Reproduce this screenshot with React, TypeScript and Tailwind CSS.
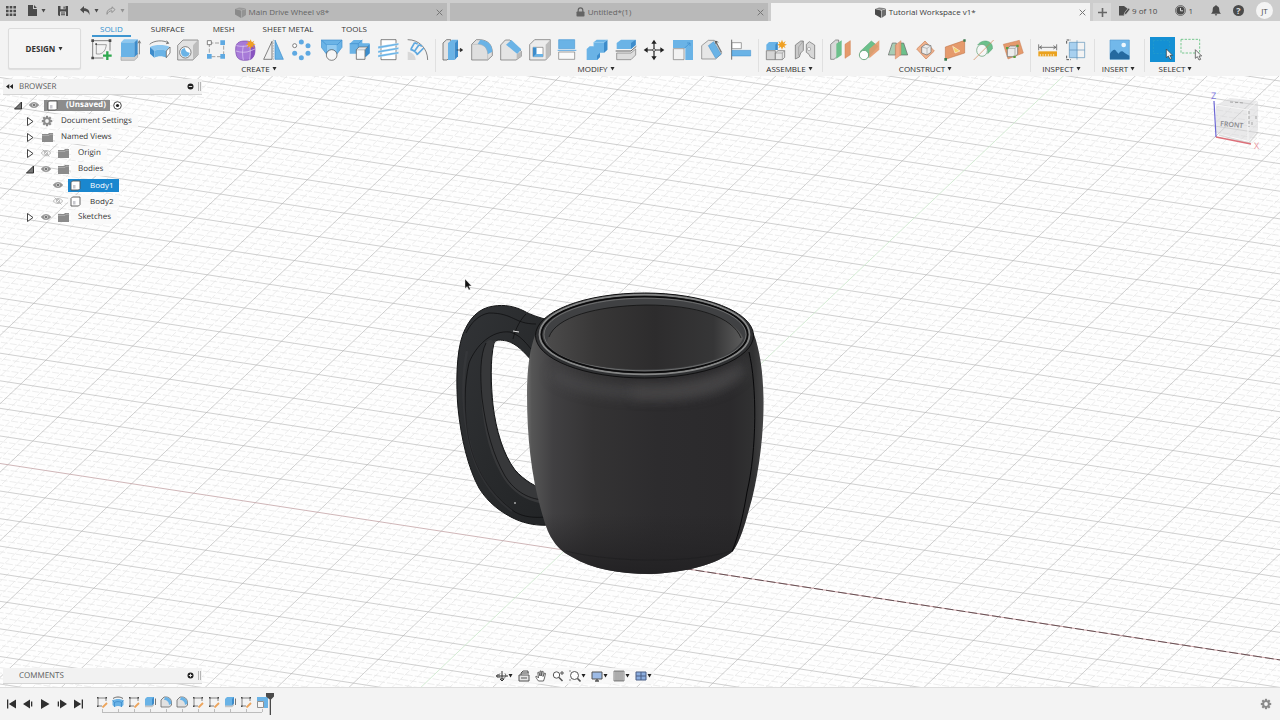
import type { ReactNode } from "react";

const BLUE = "#6ab3e6";
const DEEP = "#3d8ccb";
const INK = "#4a4a4a";
const GREEN = "#6cc08b";
const ORANGE = "#e59a6c";

/* ---------- shared bits ---------- */

function Caret({ className = "" }: { className?: string }) {
  return (
    <svg viewBox="0 0 6 5" className={"h-[4px] w-[5px] shrink-0 " + className} aria-hidden="true">
      <path d="M.5 0h5L3 4.500z" fill="currentColor" />
    </svg>
  );
}

function Art({ children }: { children: ReactNode }) {
  return (
    <svg viewBox="0 0 66 66" className="h-[22px] w-[22px]" fill="none" stroke={INK} strokeWidth="2.4" aria-hidden="true">
      {children}
    </svg>
  );
}

function Star({ x, y }: { x: number; y: number }) {
  return (
    <path
      transform={`translate(${x} ${y})`}
      d="M0-15L3.5-6 11-11 7-3 15 0 7 3 11 11 3.5 6 0 15-3.5 6-11 11-7 3-15 0-7-3-11-11-3.5-6z"
      fill="#f0a022"
      stroke="none"
    />
  );
}

/* ---------- tool icons ---------- */

const createTools: [string, ReactNode][] = [
  ["Create Sketch", <>
    <path d="M5 5h52M5 5v52M57 5v30M5 57h32" strokeWidth="2" />
    <path d="M16 17v28h10c12-3 18-12 20-28z" stroke="#777" strokeWidth="2" />
    <path d="M1 1h8v8H1zM53 1h8v8h-8zM1 53h8v8H1zM13 13h5v5h-5z" fill={INK} stroke="none" />
    <path d="M49 37v26M36 50h26" stroke="#2fa84f" strokeWidth="7" />
  </>],
  ["Extrude", <>
    <path d="M3 52h40l10-9v12L43 64H3z" fill="#cfcfcf" stroke="#888" strokeWidth="1.5" />
    <path d="M3 10L12 1h41L43 10z" fill="#8cc7f0" stroke="none" />
    <path d="M3 10h40v44H3z" fill={BLUE} stroke="none" />
    <path d="M43 10L53 1v44l-10 9z" fill={DEEP} stroke="none" />
    <path d="M58 46V8M54 13l4-8 4 8" strokeWidth="2" />
  </>],
  ["Revolve", <>
    <path d="M2 16C14 4 44 2 58 12M53 5l6 8-8 1" strokeWidth="2" />
    <path d="M3 24C18 16 48 16 62 24L52 36c-12-6-26-6-36 0z" fill="#8cc7f0" stroke="none" />
    <path d="M3 24l13 12v20L3 44z" fill={DEEP} stroke="none" />
    <path d="M16 36c10-6 26-6 36 0v20c-10-6-26-6-36 0z" fill={BLUE} stroke="none" />
    <path d="M52 36l11-12v18L52 56z" fill="#fff" strokeWidth="2" />
  </>],
  ["Hole", <>
    <path d="M2 19L18 3h45v44L48 63H2z" fill="#e2e2e2" stroke="#666" strokeWidth="2" />
    <path d="M48 19L63 3v44L48 63z" fill="#bdbdbd" stroke="none" />
    <circle cx="25" cy="40" r="17" fill="#fff" strokeWidth="2" />
    <path d="M24 27a13 13 0 1 0 14 14c-9 0-14-6-14-14z" fill={BLUE} stroke="none" />
  </>],
  ["Pattern", <>
    <path d="M10 12h34M10 12v36M16 53h30M53 20v26" stroke="#777" strokeWidth="2" strokeDasharray="12 5" />
    <path d="M4 5h12v12H4z" fill="#fff" strokeWidth="2" />
    <path d="M43 4h14v14H43zM3 45h14v14H3zM43 45h14v14H43z" fill="#5ea9e2" stroke="none" />
  </>],
  ["Create Form", <>
    <path d="M2 30C2 12 12 6 30 6s30 6 30 26-8 32-30 32S2 54 2 30z" fill="#a77ad8" stroke="#7848ae" strokeWidth="2" />
    <path d="M44 20c12-4 16 2 16 14s-6 26-14 28z" fill="#8854c0" stroke="none" />
    <path d="M3 36c14 5 32 5 42 0l15-6M25 20c-3 14-3 30 0 43M4 20c14 3 28 3 42-2M44 20c3 14 2 30 0 42" stroke="#e3d2f5" strokeWidth="2" />
    <Star x={47} y={16} />
  </>],
  ["Mirror", <>
    <path d="M27 7v54H2z" fill="#efefef" strokeWidth="2" />
    <path d="M36 3v58h25z" fill={BLUE} stroke={DEEP} strokeWidth="2" />
    <path d="M31 2v62" stroke="#888" strokeWidth="1.5" strokeDasharray="5 3" />
  </>],
  ["Circular Pattern", <>
    <g fill="#5ea9e2" stroke="none">
      <circle cx="28" cy="9" r="7.500" /><circle cx="48" cy="20" r="7.500" /><circle cx="48" cy="43" r="7.500" />
      <circle cx="28" cy="56" r="7.500" /><circle cx="8" cy="43" r="7.500" />
    </g>
    <circle cx="8" cy="20" r="6" fill="#fff" strokeWidth="2" />
  </>],
  ["Thicken", <>
    <path d="M1 3h62v22L47 46c-8-12-22-12-30 0L1 25z" fill={BLUE} stroke={DEEP} strokeWidth="2" />
    <path d="M1 3l16 15h31L63 3M17 18v24" stroke={DEEP} strokeWidth="2" />
    <path d="M17 18h30v20c-8-8-22-8-30 0z" fill="#93cbf1" stroke="none" />
    <circle cx="32" cy="48" r="16" fill="#f6f6f6" strokeWidth="2" />
  </>],
  ["Boundary Fill", <>
    <path d="M2 14L14 3h26v10h22l0 30-12 10H30V44H2z" fill={BLUE} stroke="none" />
    <path d="M2 14h26l12-11M28 14v18" stroke={DEEP} strokeWidth="2" />
    <path d="M50 28l12-13v28L50 54z" fill={DEEP} stroke="none" />
    <path d="M22 32h26v29H22z" fill="#f8f8f8" strokeWidth="2" />
    <path d="M22 32l8-8h26l-8 8" fill="#e8e8e8" strokeWidth="1.5" />
  </>],
  ["Rib", <>
    <path d="M9 2h45v60H9z" fill="#fff" strokeWidth="2" />
    <path d="M0 22l62-10v6L0 29zM0 35l62-10v6L0 42zM0 48l62-10v6L0 55z" fill={BLUE} stroke="#fff" strokeWidth="1" />
  </>],
  ["Emboss", <>
    <path d="M2 2c34 0 60 26 60 61" strokeWidth="2" />
    <path d="M2 38c13 0 24 11 24 25H2z" fill="#d8d8d8" stroke="none" />
    <path d="M10 31c9 2 17 8 22 17M23 11L12 30M36 17L23 36M50 27L31 46M23 11l9 4M36 17l9 5" stroke="#5fa9e0" strokeWidth="5" />
  </>],
];

const modifyTools: [string, ReactNode][] = [
  ["Press Pull", <>
    <path d="M3 12L14 2h12v50L15 63H3z" fill="#e2e2e2" strokeWidth="2" />
    <path d="M18 12L30 2h18L38 12v51H18z" fill={BLUE} stroke="none" />
    <path d="M38 12L48 2v50L38 63z" fill={DEEP} stroke="none" />
    <path d="M44 33h15M55 28l7 5-7 5z" fill="#222" stroke="#222" strokeWidth="2" />
  </>],
  ["Fillet", <>
    <path d="M2 16L16 2h12c22 2 36 14 36 40v8L50 63H2z" fill="#dfdfdf" stroke="#666" strokeWidth="2" />
    <path d="M28 2c22 2 36 14 36 36l-14 8C48 26 40 18 20 15z" fill={BLUE} stroke="none" />
    <path d="M2 16h18c20 0 30 12 30 30v17" stroke="#aaa" strokeWidth="1.5" />
  </>],
  ["Chamfer", <>
    <path d="M2 18L16 3h14l34 34v15L48 63H2z" fill="#e4e4e4" stroke="#666" strokeWidth="2" />
    <path d="M34 3l30 28-12 14-34-28z" fill={BLUE} stroke="none" />
    <path d="M50 46v17l14-12V37z" fill="#bbb" stroke="none" />
  </>],
  ["Shell", <>
    <path d="M2 17L17 2h47v46L50 63H2z" fill="#ececec" stroke="#666" strokeWidth="2" />
    <path d="M50 17L64 2v46L50 63z" fill="#bdbdbd" stroke="none" />
    <path d="M12 25h30v28H12z" fill="#fff" stroke="#777" strokeWidth="2" />
    <path d="M12 25h10v20h20v8H12z" fill={BLUE} stroke="none" />
    <path d="M12 53l10-9V26H12z" fill={DEEP} stroke="none" />
  </>],
  ["Replace Face", <>
    <path d="M5 2h48v27H5z" fill={BLUE} stroke="#4b9ad6" strokeWidth="2" />
    <path d="M5 39h48v22H5z" fill="#fafafa" stroke="#777" strokeWidth="2" />
    <path d="M2 34h56" stroke="#5ea9e2" strokeWidth="3" />
  </>],
  ["Combine", <>
    <path d="M2 30l9-8h12V10l9-8h32v30l-10 9H42v13l-9 9H2z" fill={BLUE} stroke="none" />
    <path d="M54 10l10-8v30l-10 9zM33 50l9-9v13l-9 9z" fill={DEEP} stroke="none" />
    <path d="M23 22V10h31l10-8" stroke="#a8d6f5" strokeWidth="2" />
  </>],
  ["Split Body", <>
    <path d="M5 12l13-10h44v16L48 30H5z" fill={BLUE} stroke="none" />
    <path d="M48 12L62 2v16L48 30z" fill={DEEP} stroke="none" />
    <path d="M2 36h46l16-14" stroke="#444" strokeWidth="2.5" />
    <path d="M5 42h43l14-12v18L48 62H5z" fill="#ddd" stroke="#777" strokeWidth="2" />
  </>],
  ["Move", <>
    <path d="M33 8v50M8 33h50" stroke="#222" strokeWidth="3.5" />
    <path d="M33 2l-8 12h16zM33 64l-8-12h16zM2 33l12-8v16zM64 33l-12-8v16z" fill="#222" stroke="none" />
    <circle cx="33" cy="33" r="4" fill="#fff" stroke="#222" strokeWidth="2" />
  </>],
  ["Scale", <>
    <path d="M3 3h60v60H40V27H3z" fill={BLUE} stroke="none" />
    <path d="M4 29h32v33H4z" fill="#f2f2f2" stroke="#777" strokeWidth="2" />
    <path d="M36 29L54 12M54 12h-9M54 12v9" stroke={DEEP} strokeWidth="2" />
  </>],
  ["Draft", <>
    <path d="M2 20L22 4h18L62 44 44 60H2z" fill="#e6e6e6" stroke="#777" strokeWidth="2" />
    <path d="M22 20L38 8l22 38-16 12z" fill={BLUE} stroke={DEEP} strokeWidth="1.5" />
    <path d="M44 6l18 34M44 6l1 9M44 6l8 4" stroke="#333" strokeWidth="2" />
  </>],
  ["Align", <>
    <path d="M5 2v60" stroke="#555" strokeWidth="2.5" />
    <path d="M6 11h28v18H6z" fill="#fff" stroke="#777" strokeWidth="2" />
    <path d="M6 34h56v17H6z" fill={BLUE} stroke={DEEP} strokeWidth="1.5" />
  </>],
];

const assembleTools: [string, ReactNode][] = [
  ["New Component", <>
    <path d="M4 17l8-8h26v24H4z" fill={BLUE} stroke="none" />
    <path d="M31 17l7-8v24h-7z" fill={DEEP} stroke="none" />
    <path d="M4 35h27v27H4z" fill="#d4d4d4" stroke="#666" strokeWidth="2" />
    <path d="M31 42l8-7h20v20l-7 7H31z" fill="#e5e5e5" stroke="#666" strokeWidth="2" />
    <path d="M31 42h21v20M52 42l7-7" stroke="#777" strokeWidth="1.5" />
    <Star x={51} y={17} />
  </>],
  ["Joint", <>
    <path d="M4 18L20 6h8v28l-8 8-4 12-12 6z" fill="#c9c9c9" stroke="#666" strokeWidth="2" />
    <path d="M14 24L28 6M14 24v26" stroke="#888" strokeWidth="1.5" />
    <path d="M62 18L46 8l-9 8v24l8 6 4 8 13 6z" fill="#d7d7d7" stroke="#666" strokeWidth="2" />
    <circle cx="45" cy="30" r="5" fill="#f4f4f4" stroke="#888" strokeWidth="1.5" />
  </>],
];

const constructTools: [string, ReactNode][] = [
  ["Offset Plane", <>
    <path d="M5 16L20 3h9v46L15 61H5z" fill="#d9d9d9" stroke="#666" strokeWidth="2" />
    <path d="M22 14L38 4v44L22 59z" fill={GREEN} stroke="none" />
    <path d="M48 16L64 5v42L48 58z" fill={ORANGE} stroke="#d08050" strokeWidth="1.5" />
  </>],
  ["Plane at Angle", <>
    <path d="M6 38L40 6l20 16-30 34z" fill={GREEN} stroke="#4f9f6c" strokeWidth="1.5" />
    <path d="M34 30L64 4v28L34 58z" fill={ORANGE} opacity=".9" stroke="none" />
    <circle cx="18" cy="48" r="14" fill="#fff" stroke="#5a9c70" strokeWidth="2.5" />
  </>],
  ["Midplane", <>
    <path d="M4 48L16 12h12L26 48z" fill="#a9cdb5" stroke="#666" strokeWidth="2" />
    <path d="M36 12h14l12 36H38z" fill={GREEN} stroke="#666" strokeWidth="2" />
    <path d="M25 18L42 5v42L25 60z" fill="#efa37c" opacity=".9" stroke="#c97d52" strokeWidth="1.5" />
  </>],
  ["Plane Through Edges", <>
    <path d="M5 30L30 6l28 30-25 24z" fill="#f0b28d" stroke="#c97d52" strokeWidth="2" />
    <path d="M20 24l12-8 16 4v20l-12 8-16-6z" fill="#ececec" stroke="#666" strokeWidth="2" />
    <path d="M20 24l16 4 12-8M36 28v20" stroke="#888" strokeWidth="1.5" />
  </>],
  ["Plane Through Points", <>
    <path d="M4 24L62 4v38L4 61z" fill={ORANGE} stroke="#b9683b" strokeWidth="1.5" />
    <path d="M26 22l22 14-15 6z" fill="#f3d26b" stroke="#fff" strokeWidth="1.5" />
    <path d="M1 57h8v8H1zM58 1h7v7h-7z" fill="#3d7b50" stroke="none" />
  </>],
  ["Axis Through Cylinder", <>
    <path d="M14 18C28-2 62 4 58 30L44 44c4-18-10-32-30-26z" fill={GREEN} stroke="#4f9f6c" strokeWidth="1.5" />
    <ellipse cx="27" cy="34" rx="16" ry="18" fill="#f6f6f6" stroke="#5a9c70" strokeWidth="2" />
    <path d="M2 63L62 3" stroke="#d08050" strokeWidth="2" />
  </>],
  ["Tangent Plane", <>
    <path d="M4 16L52 4l12 38-46 18z" fill={ORANGE} stroke="#c97d52" strokeWidth="1.5" />
    <path d="M16 28l9-7h22v24l-8 8H16z" fill="#ececec" stroke="#666" strokeWidth="2" />
    <path d="M16 28h23v25M39 28l8-7" stroke="#777" strokeWidth="1.5" />
    <path d="M12 24h7v7h-7zM43 17h7v7h-7zM34 50h7v7h-7z" fill="#5c9d3f" stroke="none" />
  </>],
];

const inspectTools: [string, ReactNode][] = [
  ["Measure", <>
    <path d="M5 16v18M59 16v18M9 25h46M15 20l-8 5 8 5M49 20l8 5-8 5" stroke="#444" strokeWidth="2" />
    <path d="M4 37h56v15H4z" fill="#eaa21f" stroke="none" />
    <path d="M10 45v7M18 45v7M26 45v7M34 45v7M42 45v7M50 45v7" stroke="#fff" strokeWidth="2" />
  </>],
  ["Interference", <>
    <path d="M10 10h24v46H10z" fill="#a8d0ef" stroke="none" />
    <path d="M10 10h46v46H10zM33 4v58M10 33h46" stroke="#5a8fb8" strokeWidth="2" />
    <path d="M2 14V3h12M2 50v12h12" stroke="#333" strokeWidth="2.5" strokeDasharray="8 3" />
  </>],
];

const insertTools: [string, ReactNode][] = [
  ["Insert Image", <>
    <path d="M3 3h58v58H3z" fill="#72b8ea" stroke="#5a9fd0" strokeWidth="2" />
    <path d="M3 44c10-14 14-14 20-6l6 6c6-8 10-10 18-2l14 8v11H3z" fill="#25699f" stroke="none" />
    <circle cx="44" cy="18" r="7" fill="#eef7fd" stroke="none" />
  </>],
];

/* ---------- tool groups ---------- */

function ToolGroup({ name, tools, className }: { name: string; tools: [string, ReactNode][]; className: string }) {
  return (
    <section className="flex shrink-0 flex-col" aria-label={name}>
      <div className={"grid h-[25px] auto-cols-fr grid-flow-col items-center justify-items-center " + className}>
        {tools.map(([label, art]) => (
          <button key={label} type="button" aria-label={label} className="flex">
            <Art>{art}</Art>
          </button>
        ))}
      </div>
      <GroupLabel name={name} />
    </section>
  );
}

function GroupLabel({ name }: { name: string }) {
  return (
    <button type="button" className="mt-px flex h-3 items-center justify-center gap-0.5 pr-0.5 text-[8px] leading-3 text-[#2c2c2c]">
      {name}
      <Caret />
    </button>
  );
}

function Divider() {
  return <div className="mt-0.5 h-[33px] w-px shrink-0 bg-[#e0e0e0]" />;
}

function Pointer({ x, y }: { x: number; y: number }) {
  return (
    <path
      transform={`translate(${x} ${y})`}
      d="M0 0v26l6-5 5 10 5-2-5-10h8z"
      fill="#f4f4f4"
      stroke="#333"
      strokeWidth="2"
    />
  );
}

function SelectGroup() {
  return (
    <section className="flex shrink-0 flex-col" aria-label="Select">
      <div className="grid h-[25px] w-[57px] grid-cols-2 items-center justify-items-center">
        <button type="button" aria-label="Select" className="h-[25px] w-[25px] bg-[#1490d4]">
          <svg viewBox="0 0 75 75" className="h-[25px] w-[25px]" fill="none" aria-hidden="true">
            <path d="M10 10h48v40H10z" stroke="#2b9fc9" strokeWidth="2" strokeDasharray="6 4" />
            <Pointer x={49} y={36} />
          </svg>
        </button>
        <button type="button" aria-label="Window Selection" className="flex">
          <svg viewBox="0 0 66 66" className="h-[22px] w-[22px] overflow-visible" fill="none" aria-hidden="true">
            <path d="M3 1h56v41H3z" stroke="#5fbf7c" strokeWidth="2.5" strokeDasharray="7 4" />
            <Pointer x={46} y={32} />
          </svg>
        </button>
      </div>
      <GroupLabel name="SELECT" />
    </section>
  );
}

/* ---------- title bar ---------- */

function CubeGlyph({ className }: { className: string }) {
  return (
    <svg viewBox="0 0 11 11" className={"h-[11px] w-[11px] " + className} aria-hidden="true">
      <path d="M0 2l4-1.500 7 .8-4 1.700z" fill="currentColor" opacity=".65" />
      <path d="M0 2l6 1.500V11L0 7.500z" fill="currentColor" />
      <path d="M6.500 3.500L11 2v6l-4.500 3z" fill="currentColor" opacity=".8" />
    </svg>
  );
}

function LockGlyph() {
  return (
    <svg viewBox="0 0 9 10" className="h-[10px] w-[9px]" aria-hidden="true">
      <path d="M2.200 5V3.200a2.300 2.300 0 0 1 4.600 0V5" fill="none" stroke="currentColor" strokeWidth="1.200" />
      <rect x=".5" y="4.500" width="8" height="5" rx=".8" fill="currentColor" />
    </svg>
  );
}

function FileTab({ title, active = false, locked = false }: { title: string; active?: boolean; locked?: boolean }) {
  return (
    <div
      className={
        "flex min-w-0 flex-1 items-center pr-0.5 pl-0.5 " +
        (active ? "bg-[#f3f3f3] text-[#3a3a3a]" : "bg-[#b9b9b9] text-[#646464]")
      }
    >
      <button type="button" className="flex min-w-0 flex-1 items-center justify-center gap-[3px] text-[8px] leading-3">
        {locked ? <LockGlyph /> : <CubeGlyph className={active ? "text-[#4a4a4a]" : "text-[#8a8a8a]"} />}
        {title}
      </button>
      <button type="button" aria-label={"Close " + title} className="flex p-0.5">
        <svg viewBox="0 0 7 7" className="h-[7px] w-[7px]" aria-hidden="true">
          <path d="M.7.7l5.600 5.600M6.300.7L.7 6.300" stroke="#777" strokeWidth="1" />
        </svg>
      </button>
    </div>
  );
}

function TitleBar() {
  return (
    <header className="flex h-[21px] shrink-0 items-stretch bg-[#cdcdcd] text-[#4b4b4b]">
      <div className="flex w-[128px] shrink-0 items-center pl-[6px]">
        <button type="button" aria-label="Data Panel" className="flex">
          <svg viewBox="0 0 10 10" className="h-[10px] w-[10px]" fill="currentColor" aria-hidden="true">
            <path d="M0 0h2.600v2.600H0zM3.700 0h2.600v2.600H3.700zM7.400 0H10v2.600H7.400zM0 3.700h2.600v2.600H0zM3.700 3.700h2.600v2.600H3.700zM7.400 3.700H10v2.600H7.400zM0 7.400h2.600V10H0zM3.700 7.400h2.600V10H3.700zM7.400 7.400H10V10H7.400z" />
          </svg>
        </button>
        <button type="button" aria-label="File" className="ml-3 flex items-center gap-1">
          <svg viewBox="0 0 9 11" className="h-[11px] w-[9px]" fill="currentColor" aria-hidden="true">
            <path d="M0 0h5v4h4v7H0zM6 0l3 3H6z" />
          </svg>
          <Caret />
        </button>
        <button type="button" aria-label="Save" className="ml-3 flex">
          <svg viewBox="0 0 10 10" className="h-[10px] w-[10px]" aria-hidden="true">
            <path d="M0 0h10v10H1L0 9z" fill="currentColor" />
            <path d="M2.500 0h5v3.300h-5zM2 5.500h6V10H2z" fill="#cdcdcd" />
            <path d="M5.500.500h1.200v2.200H5.500zM3 6.500h4v1H3zM3 8.300h4v1H3z" fill="currentColor" />
          </svg>
        </button>
        <button type="button" aria-label="Undo" className="ml-3 flex items-center gap-1">
          <svg viewBox="0 0 10 9" className="h-[9px] w-[10px]" aria-hidden="true">
            <path d="M4 0v2.200c3.500 0 6 2 5.500 6.800C8.500 6.200 7 5 4 5v2.300L0 3.700z" fill="currentColor" />
          </svg>
          <Caret />
        </button>
        <button type="button" aria-label="Redo" className="ml-[7px] flex items-center gap-1 text-[#929292]">
          <svg viewBox="0 0 10 9" className="h-[9px] w-[10px]" aria-hidden="true">
            <path d="M6 .8v1.900C3 2.700.6 4.500 1 8.300 2 6 3.500 4.800 6 4.800v1.800l3-3z" fill="none" stroke="currentColor" />
          </svg>
          <Caret />
        </button>
      </div>
      <nav className="mt-[3px] flex min-w-0 flex-1 gap-[3px]" aria-label="Documents">
        <FileTab title="Main Drive Wheel v8*" />
        <FileTab title="Untitled*(1)" locked />
        <FileTab title="Tutorial Workspace v1*" active />
      </nav>
      <button type="button" aria-label="New Design" className="mt-[3px] ml-[3px] flex w-[18px] items-center justify-center bg-[#d8d8d8]">
        <svg viewBox="0 0 9 9" className="h-[9px] w-[9px]" aria-hidden="true">
          <path d="M4.500 0v9M0 4.500h9" stroke="#666" strokeWidth="1.600" />
        </svg>
      </button>
      <div className="flex w-[169px] shrink-0 items-center pl-2 text-[8px] leading-3">
        <button type="button" className="flex items-center gap-0.5">
          <svg viewBox="0 0 11 10" className="h-[10px] w-[11px]" aria-hidden="true">
            <path d="M0 0h5l4 3-4 6.500H0z" fill="currentColor" />
            <path d="M5 9l1-2.800L9.500 2 11 3.300 7.500 8z" fill="currentColor" stroke="#cdcdcd" strokeWidth=".7" />
          </svg>
          9 of 10
        </button>
        <button type="button" className="ml-[18px] flex items-center gap-0.5">
          <svg viewBox="0 0 11 11" className="h-[11px] w-[11px]" aria-hidden="true">
            <circle cx="5.500" cy="5.500" r="5" fill="none" stroke="currentColor" strokeWidth=".7" />
            <circle cx="5.500" cy="5.500" r="4" fill="currentColor" />
            <path d="M5.500 3v2.800H8" stroke="#ddd" strokeWidth="1" fill="none" />
          </svg>
          1
        </button>
        <button type="button" aria-label="Notifications" className="ml-[18px] flex">
          <svg viewBox="0 0 10 11" className="h-[11px] w-[10px]" fill="currentColor" aria-hidden="true">
            <path d="M5 0l1 1c2 .7 2.300 2 2.300 4 0 1.800.7 2.800 1.700 3.700H0C1 7.800 1.700 6.800 1.700 5c0-2 .3-3.300 2.300-4zM3.800 9.300h2.400a1.200 1.200 0 0 1-2.400 0z" />
          </svg>
        </button>
        <button type="button" aria-label="Help" className="ml-3 flex h-[11px] w-[11px] items-center justify-center rounded-full bg-[#4b4b4b] text-[9px] leading-none font-bold text-[#dedede]">
          ?
        </button>
        <button type="button" className="ml-3 flex h-[17px] w-[17px] items-center justify-center rounded-full bg-[#f4f4f4] text-[8px] leading-none">
          JT
        </button>
      </div>
    </header>
  );
}

/* ---------- ribbon ---------- */

function Ribbon() {
  const tabs = ["SOLID", "SURFACE", "MESH", "SHEET METAL", "TOOLS"];
  return (
    <div className="flex h-[55px] shrink-0 overflow-hidden bg-[#f3f3f3] pl-2 text-[#333]">
      <button
        type="button"
        className="mt-[7px] flex h-[41px] w-[73px] shrink-0 items-center justify-center gap-[3px] rounded-xs border border-[#dcdcdc] bg-[#f5f5f5] text-[8px] font-bold shadow-[0_1px_1px_#00000018]"
      >
        DESIGN
        <Caret />
      </button>
      <div className="ml-[7px] flex min-w-0 flex-col pt-px">
        <div className="ml-1 flex h-[15px] gap-3" role="tablist">
          {tabs.map((tab, i) => (
            <button
              key={tab}
              type="button"
              role="tab"
              aria-selected={i === 0}
              className={
                "flex items-center border-b-2 px-2 pt-px text-[8px] leading-3 whitespace-nowrap " +
                (i === 0 ? "border-[#3f96d0] text-[#2f8fce]" : "border-transparent")
              }
            >
              {tab}
            </button>
          ))}
        </div>
        <div className="flex gap-[3px]">
          <ToolGroup name="CREATE" tools={createTools} className="w-[344px]" />
          <Divider />
          <ToolGroup name="MODIFY" tools={modifyTools} className="w-[316px]" />
          <Divider />
          <ToolGroup name="ASSEMBLE" tools={assembleTools} className="w-[57px]" />
          <Divider />
          <ToolGroup name="CONSTRUCT" tools={constructTools} className="w-[201px]" />
          <Divider />
          <ToolGroup name="INSPECT" tools={inspectTools} className="w-[57px]" />
          <Divider />
          <ToolGroup name="INSERT" tools={insertTools} className="w-[43px]" />
          <Divider />
          <SelectGroup />
        </div>
      </div>
    </div>
  );
}

/* ---------- modelling scene ---------- */

const ORIGIN = { x: 565, y: 550.2 };
const U = { x: 61.9, y: 9.5 };
const V = { x: 24.95, y: -23.74 };

function at(u: number, v: number) {
  return { x: ORIGIN.x + u * U.x + v * V.x, y: ORIGIN.y + u * U.y + v * V.y };
}

function segment(u1: number, v1: number, u2: number, v2: number) {
  const a = at(u1, v1);
  const b = at(u2, v2);
  return `M${a.x.toFixed(1)} ${a.y.toFixed(1)}L${b.x.toFixed(1)} ${b.y.toFixed(1)}`;
}

function gridPaths() {
  let major = "";
  let minor = "";
  for (let i = -150; i <= 150; i++) {
    const k = i / 5;
    const d = segment(-30, k, 30, k) + segment(k, -30, k, 30);
    if (i % 5 === 0) {
      if (i !== 0) major += d;
    } else {
      minor += d;
    }
  }
  return { major, minor };
}

const grid = gridPaths();

const HANDLE =
  "M548 320C538 317 531 315 524 311C514 306 504 304.500 494 306C478 308 469 319 463 334C456 352 456 385 458 408C461 438 468 468 479 488C488 503 502 513 515 519C526 524 538 526 550 525L550 492C535 487 524 480 515 470C503 454 496 430 493 405C491 385 490 360 494 343C496 339 500 340 507 341C517 344 524 352 532 361L550 350Z";
const BODY =
  "M535.500 334C530 348 527 368 527 395C527 440 532 482 544 520C550 541 560 551 572 557C592 569 620 574 650 574C684 573 718 564 733 551C742 538 746 520 752 499C760 466 764 430 763.500 398C763 372 760 350 753.500 333Z";

function Scene() {
  return (
    <svg viewBox="0 76 1280 611" preserveAspectRatio="xMidYMid slice" className="absolute inset-0 h-full w-full" role="img" aria-label="Mug model on the ground grid">
      <defs>
        <linearGradient id="wall" x1="0" x2="1" y1="0" y2="0">
          <stop offset="0" stopColor="#6b6b6b" />
          <stop offset=".02" stopColor="#565656" />
          <stop offset=".11" stopColor="#414042" />
          <stop offset=".28" stopColor="#343334" />
          <stop offset=".55" stopColor="#2d2c2e" />
          <stop offset=".86" stopColor="#2b2a2c" />
          <stop offset=".955" stopColor="#313132" />
          <stop offset="1" stopColor="#444445" />
        </linearGradient>
        <linearGradient id="foot" x1="0" x2="0" y1="0" y2="1">
          <stop offset=".75" stopColor="#242325" stopOpacity="0" />
          <stop offset="1" stopColor="#222123" stopOpacity=".95" />
        </linearGradient>
        <linearGradient id="cavity" x1="0" x2="1" y1="0" y2="0">
          <stop offset="0" stopColor="#4c4b4b" />
          <stop offset=".25" stopColor="#383737" />
          <stop offset=".55" stopColor="#2d2c2d" />
          <stop offset=".85" stopColor="#363637" />
          <stop offset="1" stopColor="#5c5c5c" />
        </linearGradient>
        <linearGradient id="grip" x1="0" x2="1" y1="0" y2="1">
          <stop offset="0" stopColor="#323437" />
          <stop offset=".5" stopColor="#292b2d" />
          <stop offset="1" stopColor="#222426" />
        </linearGradient>
        <filter id="soft" x="-30%" y="-60%" width="160%" height="220%">
          <feGaussianBlur stdDeviation="6" />
        </filter>
        <clipPath id="bodyClip"><path d={BODY} /></clipPath>
      </defs>
      <rect x="0" y="76" width="1280" height="611" fill="#fefefe" />
      <path d={grid.minor} stroke="#dedede" strokeWidth=".55" strokeDasharray="7 2" fill="none" />
      <path d={grid.major} stroke="#b0b0b0" strokeWidth=".6" fill="none" />
      <path d={segment(0, -30, 0, 30)} stroke="#cfe9cf" strokeWidth=".9" />
      <path d={segment(-30, 0, 0, 0)} stroke="#c3a3a6" strokeWidth=".8" />
      <path d={segment(0, 0, 30, 0)} stroke="#cfa5a9" strokeWidth="1" />
      <path d={segment(0, 0, 30, 0)} stroke="#59464a" strokeWidth=".9" strokeDasharray="9 3" />

      <path d={HANDLE} fill="url(#grip)" stroke="#151617" strokeWidth="1" />
      <path d="M494 343C490 355 489 380 492 404C496 434 503 456 516 472C524 481 535 487 546 491L546 504C525 502 509 490 500 472C487 449 482 418 481 392C480 370 481 353 486 343C488 339 492 339 494 343Z" fill="#37383a" />
      <path d="M541 360C530 350 524 336 510 332C492 330 476 345 469 363C464 385 464 410 468 435C474 470 492 496 515 512C524 517 533 518 546 517M536 324C514 324 514 313 489 313C478 315 471 323 466 333M486 343C480 355 480 375 482 398C486 430 493 455 505 476C515 492 530 500 546 500M526 314C518 322 514 334 513 339" fill="none" stroke="#0c0c0d" strokeWidth=".7" />
      <path d="M467 351C461 381 463 416 470 445C476 472 492 497 512 511" fill="none" stroke="#45474a" strokeWidth="2.500" opacity=".3" />
      <path d="M513 331l6 1M514 503h2" stroke="#e8e8e8" strokeWidth="1" />

      <path d={BODY} fill="url(#wall)" />
      <path d={BODY} fill="url(#foot)" />
      <g clipPath="url(#bodyClip)">
        <path d="M552 368C590 392 700 396 742 360L746 372C728 396 690 402 632 398C590 396 562 388 550 376Z" fill="#505051" opacity=".65" filter="url(#soft)" />
        <path d="M632 385C670 389 706 383 736 368L736 376C708 395 670 400 632 398Z" fill="#4b4a4a" opacity=".6" filter="url(#soft)" />
        <path d="M749 352C757 385 757 450 747 492C744 510 740 531 732 552" fill="none" stroke="#08080a" strokeWidth="1" />
        <path d="M566 551C600 560 680 566 732 551" fill="none" stroke="#1f1e20" strokeWidth=".6" />
      </g>
      <ellipse cx="644.500" cy="335.500" rx="109" ry="42.500" fill="#2f3032" stroke="#101011" strokeWidth="1" />
      <ellipse cx="644.500" cy="334.500" rx="105" ry="39.800" fill="#29292a" stroke="#858686" strokeWidth="1.700" />
      <ellipse cx="644.500" cy="334.500" rx="103" ry="37.800" fill="#424244" stroke="#0b0b0c" strokeWidth="1.500" />
      <ellipse cx="645" cy="334.500" rx="101" ry="36.300" fill="#404143" stroke="#777878" strokeWidth=".8" />
      <path d="M547 342C552 319 595 305 646 305C697 305 736 319 743 338C736 358 693 369.500 645 369.500C596 369.500 554 360 547 342Z" fill="url(#cavity)" />
      <path d="M549 337C556 317 596 306 646 305C697 305 733 317 741 338" fill="none" stroke="#111" strokeWidth=".8" />

      <path d="M465 279v9.500l2.200-2 1.700 3.500 1.500-.7-1.600-3.400h2.700z" fill="#111" stroke="#f4f4f4" strokeWidth=".4" />
    </svg>
  );
}

function ViewCube() {
  return (
    <svg viewBox="0 0 60 64" className="absolute top-[12px] right-[13px] h-[64px] w-[60px]" role="img" aria-label="View cube">
      <path d="M9 17l14-7 28 3v29l-9 11-33-8z" fill="#d4d4d6" opacity=".5" />
      <path d="M9 17l32 5 10-9M41 22v30" fill="none" stroke="#f6f6f6" strokeWidth="1" />
      <path d="M23 14l14 1M42 23v16M49 28v4M45 34v4" stroke="#a5a5a5" strokeWidth="1" strokeDasharray="3 2" />
      <path d="M12 47l30 8 9-11" fill="none" stroke="#bbb" strokeWidth="1.500" opacity=".5" />
      <text x="13" y="38" transform="rotate(5 13 38)" fontSize="7" fontWeight="600" fill="#87878b">FRONT</text>
      <path d="M7 13l2 36" stroke="#6b66d4" strokeWidth="1.200" />
      <path d="M9 49l35 7" stroke="#dc6f79" strokeWidth="1.300" />
      <text x="4" y="11" fontSize="9" fill="#8079df">Z</text>
      <text x="47" y="61" fontSize="9" fill="#eb949c">X</text>
    </svg>
  );
}

/* ---------- browser panel ---------- */

function PanelHeader({ title, mark, arrows = false }: { title: string; mark: string; arrows?: boolean }) {
  return (
    <div className="flex h-4 items-center border-b border-[#d5d5d5] bg-[#f2f2f2] pr-px pl-[3px] text-[8px] text-[#5a5a5a]">
      <span className="flex w-[13px]">
        {arrows && (
          <svg viewBox="0 0 7 5" className="h-[5px] w-[7px]" aria-hidden="true">
            <path d="M3.300 0v5L0 2.500zM7 0v5L3.700 2.500z" fill="#222" />
          </svg>
        )}
      </span>
      <h2>{title}</h2>
      <button type="button" aria-label={"Toggle " + title} className="ml-auto flex">
        <svg viewBox="0 0 7 7" className="h-[7px] w-[7px]" aria-hidden="true">
          <circle cx="3.500" cy="3.500" r="3" fill="#1f1f1f" />
          <path d={mark} stroke="#f2f2f2" strokeWidth=".9" />
        </svg>
      </button>
      <span className="ml-1 h-[9px] w-[3px] border-x border-[#b5b5b5]" />
    </div>
  );
}

function Arrow({ open = false }: { open?: boolean }) {
  return (
    <button type="button" aria-label={open ? "Collapse" : "Expand"} className="flex w-4 shrink-0 justify-center">
      <svg viewBox="0 0 8 9" className="h-[9px] w-[8px]" aria-hidden="true">
        {open ? <path d="M7.500 1v7H.5z" fill="#777" stroke="#333" /> : <path d="M1.500.5v8l5.500-4z" fill="#fff" stroke="#444" />}
      </svg>
    </button>
  );
}

function Eye({ off = false }: { off?: boolean }) {
  return (
    <button type="button" aria-label={off ? "Show" : "Hide"} className="flex w-4 shrink-0 justify-center">
      <svg viewBox="0 0 10 8" className="h-[8px] w-[10px]" aria-hidden="true">
        <path d="M.3 4C2.500.6 7.500.6 9.700 4 7.500 7.400 2.500 7.400.3 4z" fill={off ? "#fafafa" : "#939393"} stroke={off ? "#a8a8a8" : "#8d8d8d"} strokeWidth=".7" />
        <circle cx="5" cy="4" r="1.700" fill={off ? "none" : "#777"} stroke={off ? "#a8a8a8" : "#e0e0e0"} strokeWidth=".7" />
        {off && <path d="M1.500.5l7 7" stroke="#a0a0a0" strokeWidth=".7" />}
      </svg>
    </button>
  );
}

function Folder() {
  return (
    <svg viewBox="0 0 11 9" className="mr-0.5 ml-1 h-[9px] w-[11px] shrink-0" aria-hidden="true">
      <path d="M0 1h6l1-1h4v9H0z" fill="#8b8b8b" />
      <path d="M0 2.500h7l1-1.200h3" stroke="#bdbdbd" strokeWidth=".6" fill="none" />
    </svg>
  );
}

function BodyGlyph() {
  return (
    <svg viewBox="0 0 11 11" className="h-[11px] w-[11px] shrink-0" aria-hidden="true">
      <path d="M1 2.500L2.500 1H10v7.500L8.500 10H1z" fill="#fff" stroke="#555" strokeWidth=".9" strokeLinejoin="round" />
      <path d="M3 5h2.500v3.500H3z" fill="#c9c9cf" />
    </svg>
  );
}

function Gear({ className }: { className: string }) {
  return (
    <svg viewBox="-6 -6 12 12" className={"shrink-0 " + className} aria-hidden="true">
      <g fill="#8a8a8a">
        {[0, 45, 90, 135].map((a) => (
          <rect key={a} x="-1.100" y="-5.200" width="2.200" height="10.400" transform={`rotate(${a})`} />
        ))}
        <circle r="3.800" />
      </g>
      <circle r="1.900" fill="#f6f6f6" />
    </svg>
  );
}

function BrowserTree() {
  const label = "bg-[#fafafa]/90 pr-1.5";
  const row = "flex h-4 items-center";
  return (
    <ul className="mt-[2px] text-[8px] leading-[14px] text-[#333]">
      <li className={row + " pl-[7px]"}>
        <Arrow open />
        <Eye />
        <span className="ml-[2px] flex h-[11px] items-center gap-2 bg-[#8c8c8c] pr-1 pl-[3px] font-bold text-white">
          <BodyGlyph />
          (Unsaved)
        </span>
        <svg viewBox="0 0 9 9" className="ml-[3px] h-[9px] w-[9px]" aria-hidden="true">
          <circle cx="4.500" cy="4.500" r="3.800" fill="#fff" stroke="#333" strokeWidth=".9" />
          <circle cx="4.500" cy="4.500" r="1.600" fill="#222" />
        </svg>
      </li>
      <li className={row + " pl-[19px]"}>
        <Arrow />
        <Gear className="mr-px ml-[3px] h-3 w-3" />
        <span className={label + " pl-[7px]"}>Document Settings</span>
      </li>
      <li className={row + " pl-[19px]"}>
        <Arrow />
        <Folder />
        <span className={label + " pl-[6px]"}>Named Views</span>
      </li>
      {[
        { name: "Origin", off: true, open: false },
        { name: "Bodies", off: false, open: true },
      ].map((item) => (
        <li key={item.name} className={row + " pl-[19px]"}>
          <Arrow open={item.open} />
          <Eye off={item.off} />
          <Folder />
          <span className={label + " pl-[7px]"}>{item.name}</span>
        </li>
      ))}
      <li className={row + " pl-[47px]"}>
        <Eye />
        <button type="button" className="ml-[2px] flex h-[13px] items-center gap-[9px] bg-[#1a87cf] pr-1.5 pl-[2px] text-white">
          <BodyGlyph />
          Body1
        </button>
      </li>
      <li className={row + " pl-[47px]"}>
        <Eye off />
        <button type="button" className="ml-[2px] flex h-[13px] items-center gap-[9px] bg-[#fafafa]/90 pr-1.5 pl-[2px]">
          <BodyGlyph />
          Body2
        </button>
      </li>
      <li className={row + " pl-[19px]"}>
        <Arrow />
        <Eye />
        <Folder />
        <span className={label + " pl-[7px]"}>Sketches</span>
      </li>
    </ul>
  );
}

/* ---------- navigation bar ---------- */

function NavIcon({ label, caret = false, children }: { label: string; caret?: boolean; children: ReactNode }) {
  return (
    <button type="button" aria-label={label} className="flex items-center">
      <svg viewBox="0 0 12 12" className="h-3 w-3" fill="none" stroke="#555" strokeWidth="1" aria-hidden="true">
        {children}
      </svg>
      {caret && <Caret className="text-[#222]" />}
    </button>
  );
}

function NavBar() {
  return (
    <div className="absolute bottom-[3px] left-1/2 ml-[-146px] flex h-4 items-center gap-[5px] bg-[#f7f7f7]/80 px-0.5">
      <NavIcon label="Orbit" caret>
        <path d="M0 6h12M2.500 4L.5 6l2 2" stroke="#333" />
        <path d="M6 1v10M4 9l2 2 2-2" stroke="#333" />
        <path d="M4 3.500C2 5 3 8.500 6 8.500s5-2 3-5" />
      </NavIcon>
      <NavIcon label="Look At">
        <path d="M1 5h10v6H1zM3 5V3l2-2h5v2M3 3h8M3 8h6" fill="#e4e4e4" />
      </NavIcon>
      <NavIcon label="Pan">
        <path d="M3.500 11C2 9 1 8 .8 6.500l1-.2L3.500 8 2.800 2.500l1-.3L5 6V1h1.200v5l1-4.700 1 .2L8 6.500 9.500 3l1 .4L9.500 8l-1 3z" fill="#fff" strokeWidth=".9" />
      </NavIcon>
      <NavIcon label="Zoom">
        <circle cx="4.500" cy="5" r="3.200" fill="#fff" />
        <path d="M7 7.500L10.500 11" strokeWidth="1.600" />
        <path d="M10 1v4M8 3h4" />
      </NavIcon>
      <NavIcon label="Fit" caret>
        <circle cx="5.500" cy="5.500" r="4" fill="#fff" />
        <path d="M8.500 8.500L11.500 11.500" strokeWidth="1.600" />
        <path d="M0 1h2M0 10h2" strokeWidth=".7" />
      </NavIcon>
      <NavIcon label="Display Settings" caret>
        <path d="M1 2h10v7H1z" fill="#9dbbe6" />
        <path d="M4 11h4M6 9v2" strokeWidth="1.500" />
      </NavIcon>
      <NavIcon label="Grid and Snaps" caret>
        <path d="M1 1h10v10H1z" fill="#e6e6e6" strokeWidth=".7" />
        <path d="M3 1v10M5 1v10M7 1v10M9 1v10" strokeWidth=".8" />
      </NavIcon>
      <NavIcon label="Viewports" caret>
        <path d="M1 2h10v8H1z" fill="#8badde" stroke="#4b5f85" />
        <path d="M6 2v8M1 6h10" stroke="#4b5f85" />
      </NavIcon>
    </div>
  );
}

/* ---------- timeline ---------- */

const timelineArt: Record<string, ReactNode> = {
  sketch: (
    <>
      <path d="M2 2h8M2 2v8M10 2v3M2 10h4" stroke="#666" strokeWidth=".8" />
      <path d="M1 1h1.500v1.500H1zM9.500 1H11v1.500H9.500zM1 9.500h1.500V11H1z" fill="#444" />
      <path d="M6.500 11.500L11 7" stroke="#eda45b" strokeWidth="1.800" />
    </>
  ),
  revolve: (
    <>
      <path d="M1 2.500C4 .5 8 .5 11 2.500" stroke="#444" strokeWidth=".8" />
      <path d="M.5 4.500c3-2 8-2 11 0V9L9.500 11c-2-1.300-5-1.300-7 0L.5 9z" fill={BLUE} />
      <path d="M.5 4.500l2 2c2-1.200 5-1.200 7 0l2-2M2.500 6.500V11M9.500 6.500V11" stroke={DEEP} strokeWidth=".8" />
    </>
  ),
  extrude: (
    <>
      <path d="M1 3l2-2h7v7.500l-2 2H1z" fill={BLUE} />
      <path d="M8 3l2-2v7.500l-2 2z" fill={DEEP} />
      <path d="M1 9.500h7l2-2v1.700L8 11.200H1z" fill="#c5c5c5" />
      <path d="M11.500 9V2.500" stroke="#555" strokeWidth=".8" />
    </>
  ),
  fillet: (
    <>
      <path d="M1 4l3-3h2c4 0 5.500 3 5.500 6v2l-2 2H1z" fill="#e1e1e1" stroke="#666" strokeWidth=".8" />
      <path d="M5 1c4 0 6.500 3 6.500 6.500L9 9c0-3-2-5-5-5z" fill={BLUE} />
    </>
  ),
  scale: (
    <>
      <path d="M1 1h11v11H8V5H1z" fill={BLUE} />
      <path d="M1.500 5.500h6v6h-6z" fill="#f5f5f5" stroke="#777" strokeWidth=".8" />
    </>
  ),
};

const steps = ["sketch", "revolve", "sketch", "extrude", "fillet", "fillet", "sketch", "sketch", "extrude", "sketch", "scale"];

const transport: [string, string][] = [
  ["Go to Start", "M2 1.500h1.300v9H2zM11 1.500v9L3.800 6z"],
  ["Step Back", "M8 1.500v9L1 6zM9 3.500h1.300v5H9z"],
  ["Play", "M2 1v10l8.500-5z"],
  ["Step Forward", "M4 1.500v9L11 6zM1.700 3.500H3v5H1.700z"],
  ["Go to End", "M1 1.500v9L8.200 6zM8.700 1.500H10v9H8.700z"],
];

function Timeline() {
  return (
    <footer className="flex h-[33px] shrink-0 items-center border-t border-[#dedede] bg-[#f3f3f3] pr-2 pl-[5px]">
      <div className="flex gap-[5px]">
        {transport.map(([label, d]) => (
          <button key={label} type="button" aria-label={label} className="flex">
            <svg viewBox="0 0 12 12" className="h-3 w-3" aria-hidden="true">
              <path d={d} fill="#2f2f2f" />
            </svg>
          </button>
        ))}
      </div>
      <div className="ml-[9px] flex">
        {steps.map((kind, i) => (
          <button key={i} type="button" aria-label={kind} className="flex h-[17px] w-4 flex-col items-center">
            <svg viewBox="0 0 12 12" className="h-3 w-3 shrink-0" fill="none" aria-hidden="true">
              {timelineArt[kind]}
            </svg>
            <span className="mt-px h-[3px] w-px bg-[#bdbdbd]" />
            <span
              className={
                "h-px shrink-0 bg-[#bdbdbd] " +
                (i === 0 ? "w-2 self-end" : i === steps.length - 1 ? "w-2 self-start" : "w-4")
              }
            />
          </button>
        ))}
      </div>
      <svg viewBox="0 0 8 22" className="-ml-1 h-[22px] w-2" aria-hidden="true">
        <path d="M0 0h8v3.500L5 6.500V22H3.700V6.500L0 3.500z" fill="#4a4a4a" />
      </svg>
      <button type="button" aria-label="Timeline Settings" className="ml-auto flex">
        <Gear className="h-3 w-3" />
      </button>
    </footer>
  );
}

export default function App() {
  return (
    <div className="flex h-screen flex-col overflow-hidden bg-[#f3f3f3] font-['Open_Sans','Noto_Sans',sans-serif] [text-rendering:geometricPrecision] select-none">
      <TitleBar />
      <Ribbon />
      <main className="relative flex min-h-0 flex-1 flex-col items-start justify-between overflow-hidden pt-[3px] pb-[3px] pl-[3px]">
        <Scene />
        <aside className="relative w-[199px]">
          <PanelHeader title="BROWSER" mark="M1.800 3.500h3.400" arrows />
          <BrowserTree />
        </aside>
        <aside className="relative w-[199px]">
          <PanelHeader title="COMMENTS" mark="M1.800 3.500h3.400M3.500 1.800v3.400" />
        </aside>
        <ViewCube />
        <NavBar />
      </main>
      <Timeline />
    </div>
  );
}
